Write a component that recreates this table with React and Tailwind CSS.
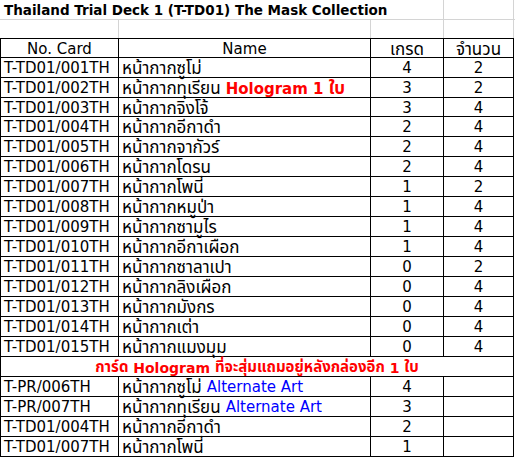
import React from 'react';

const mainRows = [
  ['T-TD01/001TH', 'หน้ากากซูโม่', null, '4', '2'],
  ['T-TD01/002TH', 'หน้ากากทุเรียน', 'holo', '3', '2'],
  ['T-TD01/003TH', 'หน้ากากจิงโจ้', null, '3', '4'],
  ['T-TD01/004TH', 'หน้ากากอีกาดำ', null, '2', '4'],
  ['T-TD01/005TH', 'หน้ากากจากัวร์', null, '2', '4'],
  ['T-TD01/006TH', 'หน้ากากโดรน', null, '2', '4'],
  ['T-TD01/007TH', 'หน้ากากโพนี่', null, '1', '2'],
  ['T-TD01/008TH', 'หน้ากากหมูป่า', null, '1', '4'],
  ['T-TD01/009TH', 'หน้ากากซามูไร', null, '1', '4'],
  ['T-TD01/010TH', 'หน้ากากอีกาเผือก', null, '1', '4'],
  ['T-TD01/011TH', 'หน้ากากซาลาเปา', null, '0', '2'],
  ['T-TD01/012TH', 'หน้ากากลิงเผือก', null, '0', '4'],
  ['T-TD01/013TH', 'หน้ากากมังกร', null, '0', '4'],
  ['T-TD01/014TH', 'หน้ากากเต่า', null, '0', '4'],
  ['T-TD01/015TH', 'หน้ากากแมงมุม', null, '0', '4'],
];

const extraRows = [
  ['T-PR/006TH', 'หน้ากากซูโม่', 'alt', '4', ''],
  ['T-PR/007TH', 'หน้ากากทุเรียน', 'alt', '3', ''],
  ['T-TD01/004TH', 'หน้ากากอีกาดำ', null, '2', ''],
  ['T-TD01/007TH', 'หน้ากากโพนี่', null, '1', ''],
];

const font = { fontFamily: 'Tahoma, "DejaVu Sans", "Noto Sans Thai", sans-serif' };

function Row({ r, h = 'h-5' }) {
  const [code, name, extra, grade, qty] = r;
  return (
    <div className={`flex ${h} border-b border-black leading-none`}>
      <div className="w-[118px] border-r border-black flex items-center pt-[2px] pl-[3px] whitespace-nowrap">{code}</div>
      <div className="w-[252px] border-r border-black flex items-center pt-[2px] pl-[3px] whitespace-nowrap">
        <span className="text-[17px]">{name}</span>
        {extra === 'holo' && (
          <span className="ml-[5px] font-bold text-[#ff0000]">
            Hologram 1 <span className="text-[17px]">ใบ</span>
          </span>
        )}
        {extra === 'alt' && <span className="ml-[5px] text-[#0000ff]">Alternate Art</span>}
      </div>
      <div className="w-[73px] border-r border-black flex items-center justify-center pt-[2px]">{grade}</div>
      <div className="w-[70px] border-r border-black flex items-center justify-center pt-[2px]">{qty}</div>
    </div>
  );
}

export default function App() {
  return (
    <div className="w-[515px] h-[457px] bg-white text-black text-[15px] overflow-hidden" style={font}>
      {/* title rows */}
      <div className="flex h-5 border-b border-[#d4d4d4]">
        <div className="w-[444px] border-r border-[#d4d4d4] flex items-center pt-[1px] pl-[4px] whitespace-nowrap font-bold text-[13.5px]">
          Thailand Trial Deck 1 (T-TD01) The Mask Collection
        </div>
        <div className="w-[70px] border-r border-[#d4d4d4]" />
      </div>
      <div className="flex h-[18px]">
        <div className="w-[119px] border-r border-[#d4d4d4]" />
        <div className="w-[252px] border-r border-[#d4d4d4]" />
        <div className="w-[73px] border-r border-[#d4d4d4]" />
        <div className="w-[70px] border-r border-[#d4d4d4]" />
      </div>

      {/* table */}
      <div className="w-[514px] border-l border-t border-black">
        <div className="flex h-[19px] border-b border-black leading-none">
          <div className="w-[118px] border-r border-black flex items-center justify-center pt-[2px]">No. Card</div>
          <div className="w-[252px] border-r border-black flex items-center justify-center pt-[2px]">Name</div>
          <div className="w-[73px] border-r border-black flex items-center justify-center pt-[2px] text-[17px]">เกรด</div>
          <div className="w-[70px] border-r border-black flex items-center justify-center pt-[2px] text-[17px]">จำนวน</div>
        </div>
        {mainRows.map((r, i) => (
          <Row key={r[0]} r={r} h={i === 2 ? 'h-[19px]' : 'h-5'} />
        ))}
        <div className="flex h-5 w-[513px] border-b border-r border-black items-center justify-center pt-[2px] font-bold text-[14px] text-[#ff0000] whitespace-nowrap leading-none">
          <span className="text-[15px]">การ์ด</span>&nbsp;Hologram&nbsp;
          <span className="text-[15px]">ที่จะสุ่มแถมอยู่หลังกล่องอีก</span>&nbsp;1&nbsp;
          <span className="text-[15px]">ใบ</span>
        </div>
        {extraRows.map((r) => (
          <Row key={r[0] + r[1]} r={r} />
        ))}
      </div>
    </div>
  );
}
